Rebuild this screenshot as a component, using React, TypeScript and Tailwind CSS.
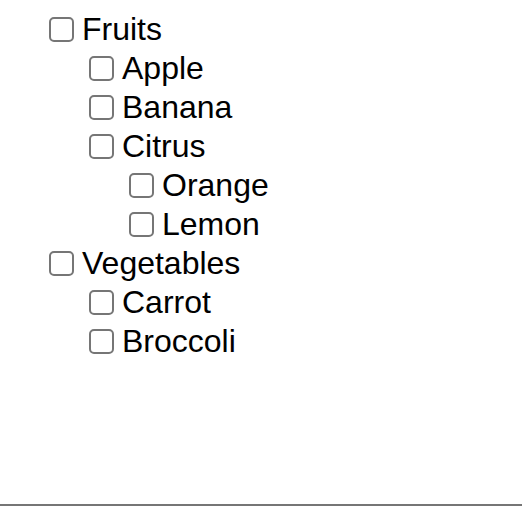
type Node = { label: string; children?: Node[] };

const tree: Node[] = [
  {
    label: "Fruits",
    children: [
      { label: "Apple" },
      { label: "Banana" },
      { label: "Citrus", children: [{ label: "Orange" }, { label: "Lemon" }] },
    ],
  },
  {
    label: "Vegetables",
    children: [{ label: "Carrot" }, { label: "Broccoli" }],
  },
];

function TreeList({ nodes, nested }: { nodes: Node[]; nested?: boolean }) {
  return (
    <ul className={nested ? "pl-[40px]" : ""}>
      {nodes.map((n) => (
        <li key={n.label}>
          <label className="flex items-center h-[39px] gap-[8px]">
            <input
              type="checkbox"
              className="appearance-none w-[25px] h-[25px] border-2 border-[#767676] rounded-[5px] bg-white shrink-0"
            />
            <span>{n.label}</span>
          </label>
          {n.children && <TreeList nodes={n.children} nested />}
        </li>
      ))}
    </ul>
  );
}

export default function App() {
  return (
    <div className="h-[506px] bg-white text-black border-b-2 border-[#767676] font-['Liberation_Sans',Arial,sans-serif] text-[32px] leading-[39px] pl-[49px] pt-[10px]">
      <TreeList nodes={tree} />
    </div>
  );
}
